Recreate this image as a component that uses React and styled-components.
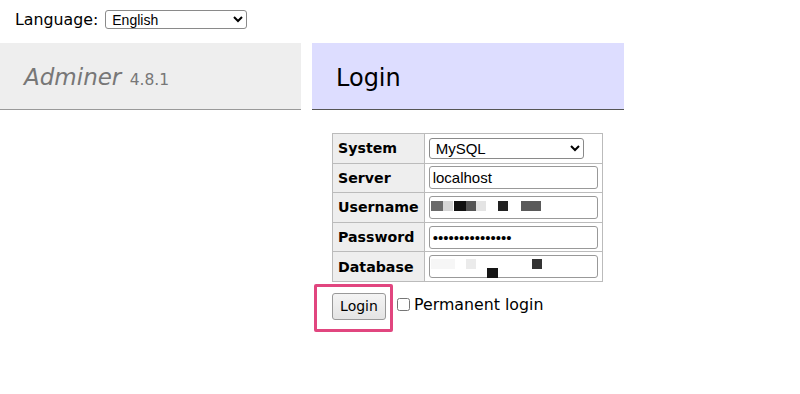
import React from "react";
import styled, { createGlobalStyle } from "styled-components";

const GlobalStyle = createGlobalStyle`
  html, body {
    margin: 0;
    padding: 0;
    background: #fff;
  }
  body {
    font-family: "DejaVu Sans", Verdana, sans-serif;
    color: #000;
  }
`;

const blurUser = [
  { x: 1, w: 12, c: "#6a6a6a" },
  { x: 13, w: 10, c: "#d6d6d6" },
  { x: 24, w: 12, c: "#111" },
  { x: 36, w: 10, c: "#555" },
  { x: 46, w: 10, c: "#e4e4e4" },
  { x: 68, w: 10, c: "#222" },
  { x: 91, w: 20, c: "#5a5a5a" },
];

const blurDb = [
  { x: 1, y: 3, w: 24, c: "#f6f6f6" },
  { x: 36, y: 3, w: 10, c: "#ebebeb" },
  { x: 57, y: 12, w: 11, c: "#151515" },
  { x: 102, y: 3, w: 10, c: "#333" },
];

function App() {
  return (
    <Page>
      <GlobalStyle />
      <LangBar>
        Language:
        <LangSelect defaultValue="en">
          <option value="en">English</option>
        </LangSelect>
      </LangBar>
      <Columns>
        <Menu>
          <Brand>
            <em>Adminer</em> <Version>4.8.1</Version>
          </Brand>
        </Menu>
        <Content>
          <Heading>Login</Heading>
          <LoginTable>
            <tbody>
              <tr>
                <th>System</th>
                <td>
                  <DriverSelect defaultValue="server">
                    <option value="server">MySQL</option>
                  </DriverSelect>
                </td>
              </tr>
              <tr>
                <th>Server</th>
                <td>
                  <Field defaultValue="localhost" />
                </td>
              </tr>
              <tr>
                <th>Username</th>
                <td>
                  <Blurred>
                    {blurUser.map((b, i) => (
                      <Pixel key={i} style={{ left: b.x, top: 4, width: b.w, background: b.c }} />
                    ))}
                  </Blurred>
                </td>
              </tr>
              <tr>
                <th>Password</th>
                <td>
                  <Field type="password" defaultValue="passwordpasswor" />
                </td>
              </tr>
              <tr>
                <th>Database</th>
                <td>
                  <Blurred>
                    {blurDb.map((b, i) => (
                      <Pixel key={i} style={{ left: b.x, top: b.y, width: b.w, background: b.c }} />
                    ))}
                  </Blurred>
                </td>
              </tr>
            </tbody>
          </LoginTable>
          <Actions>
            <Highlight>
              <LoginButton>Login</LoginButton>
            </Highlight>
            <Permanent>
              <Check type="checkbox" />
              Permanent login
            </Permanent>
          </Actions>
        </Content>
      </Columns>
    </Page>
  );
}

export default App;

const Page = styled.div`
  width: 800px;
  height: 394px;
  overflow: hidden;
`;

const LangBar = styled.div`
  display: flex;
  align-items: center;
  gap: 7px;
  height: 18px;
  padding: 10px 0 0 15px;
  font-size: 15.8px;
`;

const LangSelect = styled.select`
  width: 142px;
  height: 19px;
  font-family: "Liberation Sans", Arial, sans-serif;
  font-size: 14px;
  border: 1px solid #8a8a8a;
  border-radius: 3px;
  background: #fff;
  padding: 0 2px;
  color: #000;
`;

const Columns = styled.div`
  display: flex;
  align-items: flex-start;
  margin-top: 15px;
`;

const Menu = styled.div`
  width: 301px;
`;

const Brand = styled.h1`
  margin: 0;
  height: 67px;
  box-sizing: border-box;
  padding: 14px 0 0 24px;
  background: #eee;
  border-bottom: 1px solid #999;
  font-weight: normal;
  font-size: 23px;
  color: #777;
  line-height: 40px;
  em {
    font-style: italic;
  }
`;

const Version = styled.span`
  font-size: 15.5px;
  margin-left: 1px;
`;

const Content = styled.div`
  margin-left: 11px;
  width: 312px;
`;

const Heading = styled.h2`
  margin: 0;
  height: 67px;
  box-sizing: border-box;
  padding: 15px 0 0 24px;
  background: #ddf;
  border-bottom: 1px solid #555;
  font-weight: normal;
  font-size: 24px;
  line-height: 40px;
`;

const LoginTable = styled.table`
  margin: 23px 0 0 20px;
  border-collapse: collapse;
  border: 1px solid #999;
  th,
  td {
    border: 1px solid #bbb;
    height: 29.6px;
    box-sizing: border-box;
    padding: 0 5px;
  }
  th {
    background: #eee;
    text-align: left;
    font-size: 14.2px;
    font-weight: bold;
    width: 82px;
  }
  td {
    width: 177px;
    padding: 0 4px 0 4px;
  }
`;

const DriverSelect = styled.select`
  width: 155px;
  height: 21px;
  font-family: "Liberation Sans", Arial, sans-serif;
  font-size: 15px;
  border: 1px solid #8a8a8a;
  border-radius: 3px;
  background: #fff;
  color: #000;
  padding: 0 2px;
  display: block;
`;

const Field = styled.input`
  display: block;
  width: 169px;
  height: 23px;
  box-sizing: border-box;
  border: 1px solid #999;
  border-radius: 3px;
  padding: 0 3px;
  font-family: "Liberation Sans", Arial, sans-serif;
  font-size: 15px;
  color: #000;
`;

const Blurred = styled.div`
  position: relative;
  width: 169px;
  height: 23px;
  box-sizing: border-box;
  border: 1px solid #999;
  border-radius: 3px;
  background: #fff;
`;

const Pixel = styled.span`
  position: absolute;
  height: 10px;
`;

const Actions = styled.div`
  display: flex;
  align-items: center;
  margin-top: 2px;
`;

const Highlight = styled.div`
  box-sizing: border-box;
  width: 79px;
  height: 48px;
  margin-left: 2px;
  border: 3px solid #e1467f;
  border-radius: 2px;
  padding: 6px 0 0 15px;
`;

const LoginButton = styled.button`
  width: 54px;
  height: 27px;
  border: 1px solid #999;
  border-radius: 3px;
  background: linear-gradient(#f4f4f4, #e4e4e4);
  font-family: "DejaVu Sans", Verdana, sans-serif;
  font-size: 14px;
  color: #000;
  padding: 0;
`;

const Permanent = styled.label`
  display: flex;
  align-items: center;
  margin-left: 4px;
  margin-top: -6px;
  font-size: 15.8px;
`;

const Check = styled.input`
  width: 13px;
  height: 13px;
  margin: 0 4px 0 0;
`;
